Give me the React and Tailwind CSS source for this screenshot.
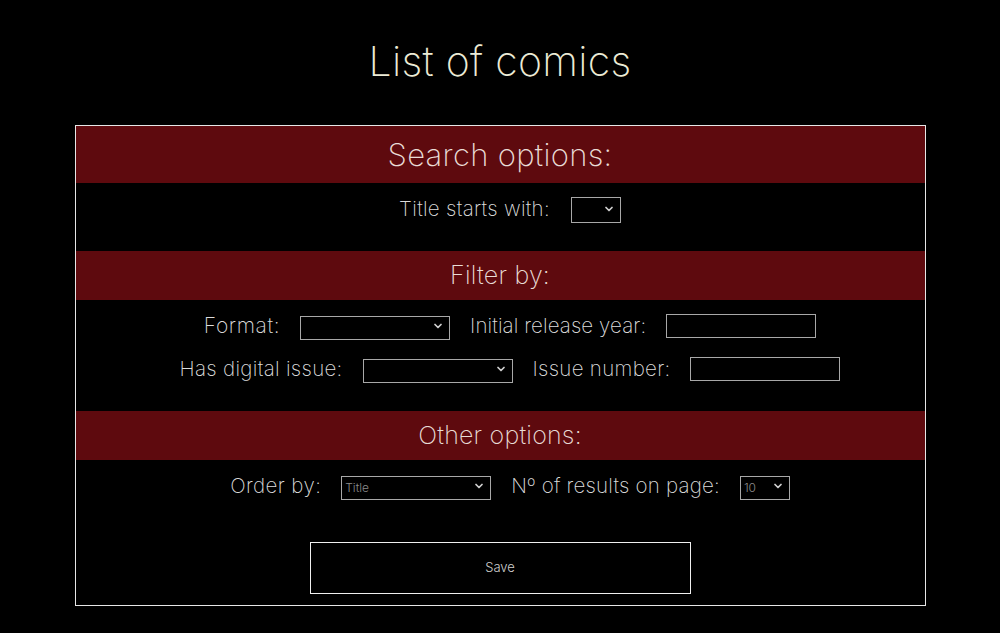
import { ChevronDown } from "lucide-react";

const font = { fontFamily: "Inter, 'Open Sans', sans-serif" };

function Band({ children, tall }) {
  return (
    <div
      className={`bg-[#5e0a0e] text-[#e9dcd6] font-extralight text-center ${
        tall
          ? "h-[57px] text-[31px] leading-[57px] tracking-[0.3px]"
          : "h-[49px] text-[25px] leading-[49px] tracking-[0.2px]"
      }`}
    >
      {children}
    </div>
  );
}

function Select({ width, value, height = "h-[24px]" }) {
  return (
    <div className={`relative ${width} ${height}`}>
      <select
        defaultValue={value}
        className="appearance-none w-full h-full bg-black border border-[#a8a8a8] text-[#8a8a8a] text-[12px] font-light pl-[3px] outline-none"
      >
        {value ? <option>{value}</option> : <option></option>}
      </select>
      <ChevronDown
        className="absolute right-[6px] top-1/2 -translate-y-1/2 w-[12px] h-[12px] text-[#cfcfcf] pointer-events-none"
        strokeWidth={3.5}
      />
    </div>
  );
}

function Input() {
  return <input className="w-[150px] h-[24px] bg-black border border-[#a8a8a8] outline-none" />;
}

function Label({ children, size = "text-[20.5px] tracking-[0.3px]" }) {
  return (
    <span className={`${size} leading-[24px] font-extralight text-[#dcdcdc]`}>{children}</span>
  );
}

export default function App() {
  return (
    <div className="min-h-[633px] bg-black text-white pt-[36px]" style={font}>
      <h1 className="text-center text-[41px] leading-[50px] font-extralight text-[#ecebd6] tracking-[0.3px]">
        List of comics
      </h1>

      <div className="w-[851px] mx-auto mt-[39px] border border-[#e6e6e6] pb-[11px]">
        <Band tall>Search options:</Band>
        <div className="flex justify-center items-center gap-[21px] pl-[20px] pt-[13px] pb-[29px]">
          <Label>Title starts with:</Label>
          <Select width="w-[50px]" height="h-[26px]" />
        </div>

        <Band>Filter by:</Band>
        <div className="flex flex-col gap-[19px] pl-[20px] pt-[14px] pb-[30px]">
          <div className="flex justify-center items-center gap-[20px]">
            <Label size="text-[21px] tracking-[0.6px]">Format:</Label>
            <Select width="w-[150px]" />
            <Label size="text-[20.5px] tracking-[0.1px]">Initial release year:</Label>
            <Input />
          </div>
          <div className="flex justify-center items-center gap-[20px]">
            <Label>Has digital issue:</Label>
            <Select width="w-[150px]" />
            <Label>Issue number:</Label>
            <Input />
          </div>
        </div>

        <Band>Other options:</Band>
        <div className="flex justify-center items-center gap-[20px] pl-[20px] pt-[14px]">
          <Label size="text-[20.5px] tracking-[0.4px]">Order by:</Label>
          <Select width="w-[150px]" value="Title" />
          <Label size="text-[20.5px] tracking-[0.2px]">Nº of results on page:</Label>
          <Select width="w-[50px]" value="10" />
        </div>

        <div className="flex justify-center pt-[44px]">
          <button className="w-[381px] h-[52px] border border-[#f0f0f0] bg-black text-[#cfcfcf] text-[13px] font-light">
            Save
          </button>
        </div>
      </div>
    </div>
  );
}
